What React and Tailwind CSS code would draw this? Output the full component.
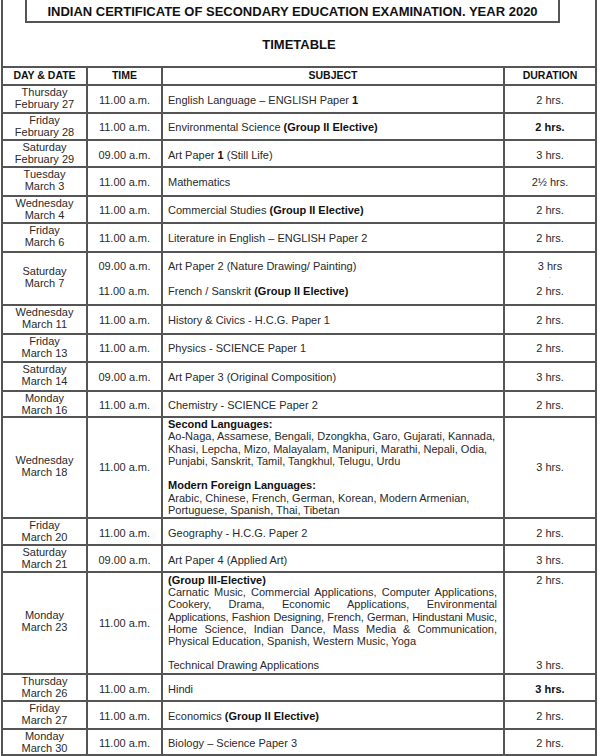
import React from "react";

const ln = "border-[#555]";

const Row = ({ h, day, date, time, subject, dur, subjectClass, durClass }) => {
  return (
    <div
      className={`grid grid-cols-[85px_75px_342px_90px] border-b-2 ${ln} ${h}`}
    >
      <div
        className={`border-r-2 ${ln} flex flex-col items-center justify-center pb-[4px] text-center leading-[12px]`}
      >
        <span>{day}</span>
        <span>{date}</span>
      </div>
      <div
        className={`border-r-2 ${ln} flex flex-col items-center justify-center`}
      >
        {time}
      </div>
      <div
        className={`border-r-2 ${ln} flex pl-[5px] pr-[6px] ${
          subjectClass || "items-center"
        }`}
      >
        {subject}
      </div>
      <div className={`flex flex-col items-center ${durClass || "justify-center"}`}>
        {dur}
      </div>
    </div>
  );
};

const Bold = ({ children }) => (
  <span className="font-bold text-[#111]">{children}</span>
);

const Just = ({ children, className = "" }) => (
  <span
    className={`block w-full whitespace-nowrap text-justify [text-align-last:justify] ${className}`}
  >
    {children}
  </span>
);

const App = () => {
  return (
    <div className="w-[598px] h-[756px] bg-white overflow-hidden font-['Liberation_Sans',Arial,sans-serif] text-[11px] text-[#2a2a2a]">
      <div className={`ml-[1px] w-[596px] h-[756px] border-x-2 ${ln}`}>
        {/* heading */}
        <div className="h-[65.5px]">
          <div
            className={`ml-[22px] w-[535px] h-[23px] border-x-2 border-b-2 ${ln} pt-[5px] text-center text-[13px] leading-[13px] font-bold text-[#111]`}
          >
            INDIAN CERTIFICATE OF SECONDARY EDUCATION EXAMINATION. YEAR 2020
          </div>
          <div className="mt-[14.5px] text-center text-[13px] leading-[13px] font-bold text-[#111]">
            TIMETABLE
          </div>
        </div>

        {/* table */}
        <div className={`border-t-2 ${ln}`}>
          <div
            className={`grid grid-cols-[85px_75px_342px_90px] h-[18.5px] border-b-2 ${ln} text-[10.5px] font-bold text-[#111]`}
          >
            <div className={`border-r-2 ${ln} flex items-center justify-center`}>
              DAY &amp; DATE
            </div>
            <div className={`border-r-2 ${ln} flex items-center justify-center`}>
              TIME
            </div>
            <div className={`border-r-2 ${ln} flex items-center justify-center`}>
              SUBJECT
            </div>
            <div className="flex items-center justify-center">DURATION</div>
          </div>

          <Row
            h="h-[27.5px]"
            day="Thursday"
            date="February 27"
            time="11.00 a.m."
            subject={
              <span>
                English Language – ENGLISH Paper <Bold>1</Bold>
              </span>
            }
            dur="2 hrs."
          />
          <Row
            h="h-[27.5px]"
            day="Friday"
            date="February 28"
            time="11.00 a.m."
            subject={
              <span>
                Environmental Science <Bold>(Group II Elective)</Bold>
              </span>
            }
            dur={<Bold>2 hrs.</Bold>}
          />
          <Row
            h="h-[27px]"
            day="Saturday"
            date="February 29"
            time="09.00 a.m."
            subject={
              <span>
                Art Paper <Bold>1</Bold> (Still Life)
              </span>
            }
            dur="3 hrs."
          />
          <Row
            h="h-[28.5px]"
            day="Tuesday"
            date="March 3"
            time="11.00 a.m."
            subject="Mathematics"
            dur="2½ hrs."
          />
          <Row
            h="h-[27.5px]"
            day="Wednesday"
            date="March 4"
            time="11.00 a.m."
            subject={
              <span>
                Commercial Studies <Bold>(Group II Elective)</Bold>
              </span>
            }
            dur="2 hrs."
          />
          <Row
            h="h-[29px]"
            day="Friday"
            date="March 6"
            time="11.00 a.m."
            subject="Literature in English – ENGLISH Paper 2"
            dur="2 hrs."
          />
          <Row
            h="h-[53px]"
            day="Saturday"
            date="March 7"
            time={
              <div className="flex flex-col gap-[13px] leading-[12px]">
                <span>09.00 a.m.</span>
                <span>11.00 a.m.</span>
              </div>
            }
            subject={
              <div className="flex flex-col gap-[13px] leading-[12px]">
                <span>Art Paper 2 (Nature Drawing/ Painting)</span>
                <span>
                  French / Sanskrit <Bold>(Group II Elective)</Bold>
                </span>
              </div>
            }
            dur={
              <div className="flex flex-col items-center leading-[12px]">
                <span>3 hrs</span>
                <span className="h-[13px] text-[7px] leading-[8px] text-[#888]">
                  .
                </span>
                <span>2 hrs.</span>
              </div>
            }
          />
          <Row
            h="h-[28.5px]"
            day="Wednesday"
            date="March 11"
            time="11.00 a.m."
            subject="History & Civics - H.C.G. Paper 1"
            dur="2 hrs."
          />
          <Row
            h="h-[28.5px]"
            day="Friday"
            date="March 13"
            time="11.00 a.m."
            subject="Physics - SCIENCE Paper 1"
            dur="2 hrs."
          />
          <Row
            h="h-[28.5px]"
            day="Saturday"
            date="March 14"
            time="09.00 a.m."
            subject="Art Paper 3 (Original Composition)"
            dur="3 hrs."
          />
          <Row
            h="h-[26.5px]"
            day="Monday"
            date="March 16"
            time="11.00 a.m."
            subject="Chemistry - SCIENCE Paper 2"
            dur="2 hrs."
          />
          <Row
            h="h-[101px]"
            day="Wednesday"
            date="March 18"
            time="11.00 a.m."
            subjectClass="items-start"
            subject={
              <div className="flex flex-col whitespace-nowrap leading-[12.3px]">
                <Bold>Second Languages:</Bold>
                <span>
                  Ao-Naga, Assamese, Bengali, Dzongkha, Garo, Gujarati, Kannada,
                </span>
                <span>
                  Khasi, Lepcha, Mizo, Malayalam, Manipuri, Marathi, Nepali, Odia,
                </span>
                <span>Punjabi, Sanskrit, Tamil, Tangkhul, Telugu, Urdu</span>
                <span>&nbsp;</span>
                <Bold>Modern Foreign Languages:</Bold>
                <span>
                  Arabic, Chinese, French, German, Korean, Modern Armenian,
                </span>
                <span>Portuguese, Spanish, Thai, Tibetan</span>
              </div>
            }
            dur="3 hrs."
          />
          <Row
            h="h-[27px]"
            day="Friday"
            date="March 20"
            time="11.00 a.m."
            subject="Geography - H.C.G. Paper 2"
            dur="2 hrs."
          />
          <Row
            h="h-[27px]"
            day="Saturday"
            date="March 21"
            time="09.00 a.m."
            subject="Art Paper 4 (Applied Art)"
            dur="3 hrs."
          />
          <Row
            h="h-[102px]"
            day="Monday"
            date="March 23"
            time="11.00 a.m."
            subjectClass="items-start pt-[1px]"
            subject={
              <div className="flex w-full flex-col leading-[12.2px]">
                <Bold>(Group III-Elective)</Bold>
                <Just>
                  Carnatic Music, Commercial Applications, Computer Applications,
                </Just>
                <Just>Cookery, Drama, Economic Applications, Environmental</Just>
                <Just className="tracking-[-0.15px]">
                  Applications, Fashion Designing, French, German, Hindustani
                  Music,
                </Just>
                <Just>
                  Home Science, Indian Dance, Mass Media &amp; Communication,
                </Just>
                <span>Physical Education, Spanish, Western Music, Yoga</span>
                <span>&nbsp;</span>
                <span>Technical Drawing Applications</span>
              </div>
            }
            durClass="justify-between pt-[1px] pb-[2px] leading-[12.2px]"
            dur={
              <>
                <span>2 hrs.</span>
                <span>3 hrs.</span>
              </>
            }
          />
          <Row
            h="h-[27px]"
            day="Thursday"
            date="March 26"
            time="11.00 a.m."
            subject="Hindi"
            dur={<Bold>3 hrs.</Bold>}
          />
          <Row
            h="h-[27.5px]"
            day="Friday"
            date="March 27"
            time="11.00 a.m."
            subject={
              <span>
                Economics <Bold>(Group II Elective)</Bold>
              </span>
            }
            dur="2 hrs."
          />
          <Row
            h="h-[26.5px]"
            day="Monday"
            date="March 30"
            time="11.00 a.m."
            subject="Biology – Science Paper 3"
            dur="2 hrs."
          />
        </div>
      </div>
    </div>
  );
};

export default App;
